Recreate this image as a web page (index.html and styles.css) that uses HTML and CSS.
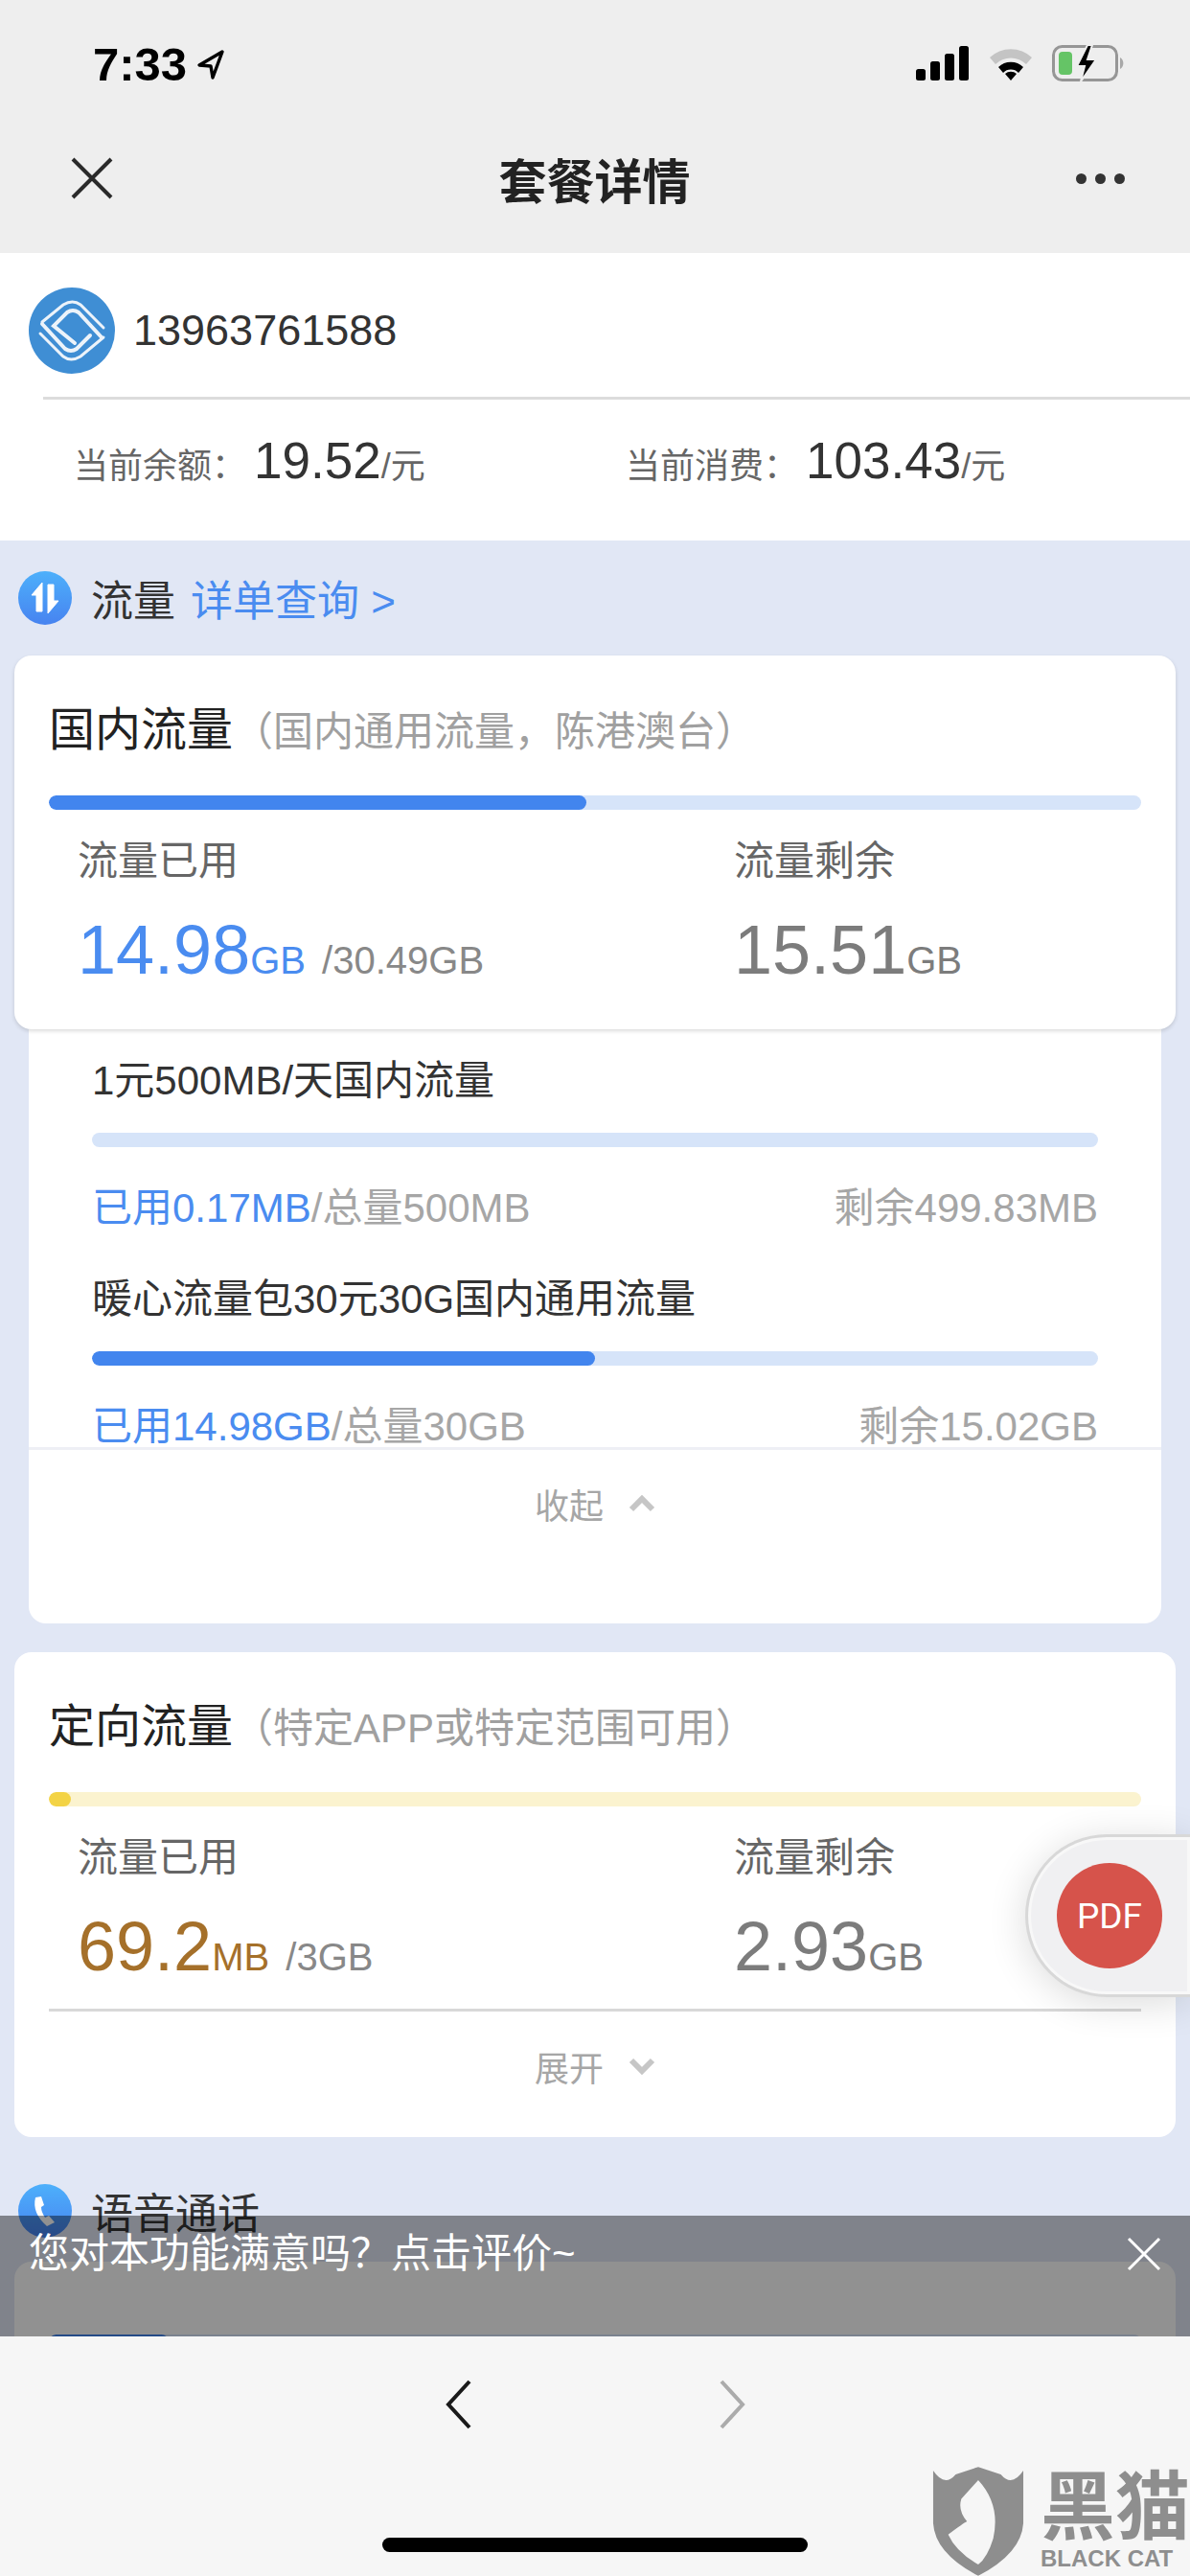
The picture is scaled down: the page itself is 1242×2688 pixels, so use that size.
FILE: index.html
```html
<!DOCTYPE html>
<html lang="en">
<head>
    <meta charset="UTF-8">
    <meta name="viewport" content="width=device-width, initial-scale=1.0">
    <title>套餐详情</title>
    <link rel="stylesheet" href="styles.css">
</head>
<body>
<div class="phone">
    <div class="top-bar">
        <div class="status-bar">
            <div class="clock">
                <span>7:33</span>
                <svg class="loc" width="30" height="32" viewBox="0 0 30 32"><path d="M27 3 L3 17 L15 18 L17 30 Z" fill="none" stroke="#000" stroke-width="3.4" stroke-linejoin="round"/></svg>
            </div>
            <div class="status-icons">
                <svg width="56" height="36" viewBox="0 0 56 36"><rect x="0" y="24" width="10" height="12" rx="2.5"/><rect x="15" y="16" width="10" height="20" rx="2.5"/><rect x="30" y="8" width="10" height="28" rx="2.5"/><rect x="45" y="0" width="10" height="36" rx="2.5"/></svg>
                <svg width="46" height="36" viewBox="0 0 46 36"><path d="M1 12 A32 32 0 0 1 45 12 L39 19 A23 23 0 0 0 7 19 Z" fill="#c4c4c4"/><path d="M10 22 A19 19 0 0 1 36 22 L31 28 A11 11 0 0 0 15 28 Z"/><path d="M17 29 A9 9 0 0 1 29 29 L23 36 Z"/></svg>
                <svg width="76" height="38" viewBox="0 0 76 38"><rect x="1.5" y="1.5" width="66" height="35" rx="9" fill="none" stroke="#969696" stroke-width="3"/><rect x="7" y="7" width="14" height="24" rx="4" fill="#65c466"/><path d="M71 13 A7 7 0 0 1 71 25 Z" fill="#a8a8a8"/><path d="M37 0 L26 22 L34 22 L30 38 L46 15 L37 15 L42 0 Z" stroke="#eee" stroke-width="2"/></svg>
            </div>
        </div>
        <div class="nav-bar">
            <svg class="nav-close" width="44" height="44" viewBox="0 0 44 44"><path d="M2 2 L42 42 M42 2 L2 42" stroke="#2a2a2a" stroke-width="4" fill="none"/></svg>
            <div class="nav-title">套餐详情</div>
            <div class="nav-more"><i></i><i></i><i></i></div>
        </div>
    </div>

    <div class="content">
        <div class="account">
            <div class="account-top">
                <svg width="90" height="90" viewBox="0 0 90 90">
                    <circle cx="45" cy="45" r="45" fill="#3f8ed4"/>
                    <g fill="none" stroke="#fff" stroke-linecap="round" opacity="0.9">
                        <path d="M12 48 L36 72 Q44 78 54 72 L78 52" stroke-width="3"/>
                        <path d="M14 38 L38 64 Q44 68 50 64 L64 50" stroke-width="4"/>
                        <path d="M78 42 L54 18 Q46 12 36 18 L14 36" stroke-width="3"/>
                        <path d="M76 52 L52 26 Q46 22 40 26 L26 40 L48 58" stroke-width="4"/>
                    </g>
                </svg>
                <span class="phone-no">13963761588</span>
            </div>
            <div class="account-line"></div>
            <div class="balance">
                <div class="balance-item"><span class="balance-label">当前余额：</span><b>19.52</b><span class="unit">/元</span></div>
                <div class="balance-item"><span class="balance-label">当前消费：</span><b>103.43</b><span class="unit">/元</span></div>
            </div>
        </div>

        <div class="section-head">
            <span class="round-icon">
                <svg width="56" height="56" viewBox="0 0 56 56"><path d="M25 12 L25 42 L19 42 L19 25 L14 25 Z" fill="#fff" stroke="#fff" stroke-linejoin="round"/><path d="M31 44 L31 14 L37 14 L37 31 L42 31 Z" fill="#fff" stroke="#fff" stroke-linejoin="round"/></svg>
            </span>
            <span class="section-name">流量</span>
            <span class="section-link">详单查询 &gt;</span>
        </div>

        <div class="card card-raised">
            <div class="card-title">国内流量<small>（国内通用流量，陈港澳台）</small></div>
            <div class="bar"><div class="bar-fill" style="width:49.2%"></div></div>
            <div class="usage">
                <div class="usage-col">
                    <div class="usage-label">流量已用</div>
                    <div class="usage-num blue"><b>14.98</b>GB <em>/30.49GB</em></div>
                </div>
                <div class="usage-col">
                    <div class="usage-label">流量剩余</div>
                    <div class="usage-num grey"><b>15.51</b>GB</div>
                </div>
            </div>
        </div>

        <div class="sub-card">
            <div class="pack">
                <div class="pack-name">1元500MB/天国内流量</div>
                <div class="bar pack-bar"></div>
                <div class="pack-info">
                    <span><span class="blue">已用0.17MB</span>/总量500MB</span>
                    <span>剩余499.83MB</span>
                </div>
            </div>
            <div class="pack">
                <div class="pack-name">暖心流量包30元30G国内通用流量</div>
                <div class="bar pack-bar"><div class="bar-fill" style="width:50%"></div></div>
                <div class="pack-info">
                    <span><span class="blue">已用14.98GB</span>/总量30GB</span>
                    <span>剩余15.02GB</span>
                </div>
            </div>
            <div class="fold fold-line">
                <span>收起</span>
                <svg width="28" height="18" viewBox="0 0 28 18"><path d="M3 15 L14 4 L25 15" fill="none" stroke="#c6c6c6" stroke-width="6"/></svg>
            </div>
        </div>

        <div class="card card-second">
            <div class="card-title">定向流量<small>（特定APP或特定范围可用）</small></div>
            <div class="bar bar-yellow"><div class="bar-fill" style="width:2%"></div></div>
            <div class="usage usage-tight">
                <div class="usage-col">
                    <div class="usage-label">流量已用</div>
                    <div class="usage-num brown"><b>69.2</b>MB <em>/3GB</em></div>
                </div>
                <div class="usage-col">
                    <div class="usage-label">流量剩余</div>
                    <div class="usage-num grey"><b>2.93</b>GB</div>
                </div>
            </div>
            <div class="card-rule"></div>
            <div class="fold">
                <span>展开</span>
                <svg width="28" height="18" viewBox="0 0 28 18"><path d="M3 3 L14 14 L25 3" fill="none" stroke="#c6c6c6" stroke-width="6"/></svg>
            </div>
        </div>

        <div class="section-head section-voice">
            <span class="round-icon">
                <svg width="56" height="56" viewBox="0 0 56 56"><path d="M18 14 Q14 30 30 44 L38 40 L32 33 L28 35 Q24 29 24 24 L27 22 L24 13 Z" fill="#fff"/></svg>
            </span>
            <span class="section-name">语音通话</span>
        </div>

        <div class="card">
            <div class="bar"><div class="bar-fill" style="width:11%"></div></div>
            <div class="usage">
                <div class="usage-col"><div class="usage-label">通话已用</div></div>
                <div class="usage-col"><div class="usage-label">通话剩余</div></div>
            </div>
        </div>

        <div class="pdf-tab"><span class="pdf-dot">PDF</span></div>

        <div class="toast">
            <span>您对本功能满意吗？点击评价~</span>
            <svg width="36" height="36" viewBox="0 0 36 36"><path d="M2 2 L34 34 M34 2 L2 34" stroke="#fff" stroke-width="3" fill="none"/></svg>
        </div>
    </div>

    <div class="bottom-bar">
        <div class="arrows">
            <svg width="30" height="52" viewBox="0 0 30 52"><path d="M26 2 L4 26 L26 50" fill="none" stroke="#1a1a1a" stroke-width="4"/></svg>
            <svg width="30" height="52" viewBox="0 0 30 52"><path d="M4 2 L26 26 L4 50" fill="none" stroke="#ababab" stroke-width="4"/></svg>
        </div>
        <div class="home-bar"></div>
        <div class="watermark">
            <svg width="100" height="116" viewBox="0 0 100 116"><path d="M2 4 Q14 22 26 8 L50 0 L74 8 Q86 22 98 4 L98 60 Q96 92 50 116 Q4 92 2 60 Z" fill="#8e8e8e"/><path d="M50 14 Q74 40 66 76 Q60 96 50 104 Q26 90 18 72 Q34 60 38 58 Q28 46 32 34 Z" fill="#f6f6f6"/></svg>
            <div class="wm-text">
                <div class="wm-cn">黑猫</div>
                <div class="wm-en">BLACK CAT</div>
            </div>
        </div>
    </div>
</div>
</body>
</html>
```

FILE: styles.css
```css
* {
    box-sizing: border-box;
}
html, body {
    margin: 0;
    padding: 0;
}
body {
    font-family: "Liberation Sans", "Noto Sans CJK SC", sans-serif;
    color: #333;
}
.phone {
    width: 1242px;
    height: 2688px;
    display: flex;
    flex-direction: column;
    overflow: hidden;
    background: #e1e7f5;
}
.top-bar {
    height: 264px;
    flex: none;
    background: #eeeeee;
}
.status-bar {
    height: 132px;
    padding: 44px 68px 0 97px;
    display: flex;
    justify-content: space-between;
    align-items: flex-start;
}
.clock {
    display: flex;
    align-items: center;
    gap: 10px;
    font-size: 49px;
    line-height: 46px;
    font-weight: bold;
    color: #000;
}
.status-icons {
    display: flex;
    gap: 20px;
    align-items: center;
    padding-top: 3px;
}
.nav-bar {
    height: 132px;
    padding: 0 68px 24px 74px;
    display: flex;
    align-items: center;
    justify-content: space-between;
}
.nav-title {
    font-size: 50px;
    font-weight: bold;
    color: #222;
}
.nav-more {
    display: flex;
    gap: 9px;
}
.nav-more i {
    width: 11px;
    height: 11px;
    border-radius: 50%;
    background: #333;
}
.content {
    position: relative;
    flex: 1;
    min-height: 0;
    overflow: hidden;
}
.account {
    height: 300px;
    background: #fff;
    padding-top: 36px;
}
.account-top {
    display: flex;
    align-items: center;
    gap: 19px;
    padding-left: 30px;
}
.phone-no {
    font-size: 45px;
    color: #333;
}
.account-line {
    height: 3px;
    margin: 24px 0 0 45px;
    background: #dcdcdc;
}
.balance {
    display: flex;
    padding: 33px 0 0 77px;
}
.balance-item {
    width: 576px;
    display: flex;
    align-items: baseline;
}
.balance-label, .unit {
    font-size: 36px;
    color: #666;
}
.balance-item b {
    font-size: 53px;
    font-weight: normal;
    color: #333;
    margin-left: 8px;
}
.section-head {
    height: 120px;
    padding: 0 0 0 19px;
    display: flex;
    align-items: center;
    font-size: 44px;
}
.round-icon {
    width: 56px;
    height: 56px;
    margin-right: 20px;
    border-radius: 50%;
    background: linear-gradient(#4db0fb, #4783f0);
}
.round-icon svg {
    display: block;
}
.section-name {
    color: #333;
    margin-right: 16px;
}
.section-link {
    color: #4a8cf0;
}
.card {
    margin: 0 15px;
    padding: 44px 36px 0;
    background: #fff;
    border-radius: 18px;
}
.card-raised {
    height: 390px;
    position: relative;
    box-shadow: 0 2px 4px rgba(0, 0, 0, 0.14);
}
.card-title {
    font-size: 48px;
    line-height: 68px;
    color: #222;
}
.card-title small {
    font-size: 42px;
    color: #a0a0a0;
}
.bar {
    height: 15px;
    margin-top: 32px;
    border-radius: 8px;
    background: #d6e4f9;
    overflow: hidden;
}
.bar-fill {
    height: 100%;
    border-radius: 8px;
    background: #4285ee;
}
.bar-yellow {
    background: #fbf3cf;
}
.bar-yellow .bar-fill {
    background: #f3d345;
}
.usage {
    display: flex;
    padding: 24px 0 0 30px;
}
.usage-tight {
    padding-top: 24px;
}
.usage-col:first-child {
    width: 685px;
}
.usage-label {
    font-size: 42px;
    line-height: 60px;
    color: #666;
}
.usage-num {
    font-size: 40px;
    margin-top: 20px;
    line-height: 84px;
    white-space: nowrap;
}
.usage-num b {
    font-size: 72px;
    font-weight: normal;
}
.usage-num em {
    font-style: normal;
    color: #888;
    margin-left: 6px;
}
.blue {
    color: #4a8cf0;
}
.grey {
    color: #7c7c7c;
}
.brown {
    color: #a5702a;
}
.sub-card {
    height: 620px;
    margin: 0 30px 30px;
    padding: 0;
    background: #fff;
    border-radius: 0 0 18px 18px;
}
.pack {
    height: 228px;
    padding: 24px 66px 0;
    font-size: 42px;
}
.pack-name {
    line-height: 60px;
    color: #333;
}
.pack-bar {
    margin-top: 24px;
}
.pack-info {
    display: flex;
    justify-content: space-between;
    margin-top: 34px;
    line-height: 60px;
    color: #a6a6a6;
}
.fold {
    height: 114px;
    display: flex;
    align-items: center;
    justify-content: center;
    gap: 26px;
    font-size: 36px;
    color: #a6a6a6;
}
.fold-line {
    border-top: 3px solid #eeeff5;
    margin-top: -20px;
}
.card-second {
    height: 506px;
}
.card-rule {
    height: 3px;
    margin-top: 12px;
    background: #d8d8d8;
}
.section-head.section-voice {
    height: 130px;
    padding-top: 24px;
}
.pdf-tab {
    position: absolute;
    right: 0;
    top: 1650px;
    width: 172px;
    height: 170px;
    padding-left: 30px;
    display: flex;
    align-items: center;
    border-radius: 85px 0 0 85px;
    background: #f0f0f2;
    border: 3px solid #d8d8d8;
    border-right: none;
    box-shadow: 0 6px 40px rgba(0, 0, 0, 0.14), inset 0 0 0 3px #f8f8f8;
}
.pdf-dot {
    width: 110px;
    height: 110px;
    flex: none;
    border-radius: 50%;
    background: #d6534b;
    color: #fff;
    font-family: Roboto, "Liberation Sans", sans-serif;
    font-size: 37px;
    display: flex;
    align-items: center;
    justify-content: center;
}
.toast {
    position: absolute;
    left: 0;
    right: 0;
    bottom: 0;
    height: 126px;
    padding: 10px 30px 0;
    display: flex;
    justify-content: space-between;
    align-items: flex-start;
    background: rgba(0, 0, 0, 0.43);
    color: #fff;
    font-size: 42px;
    line-height: 60px;
}
.toast svg {
    margin-top: 12px;
    margin-right: 0;
}
.bottom-bar {
    height: 250px;
    flex: none;
    position: relative;
    background: #f6f6f6;
}
.arrows {
    display: flex;
    justify-content: center;
    gap: 255px;
    padding-top: 45px;
    margin-left: 0;
}
.arrows svg {
    display: block;
}
.home-bar {
    position: absolute;
    left: 399px;
    top: 210px;
    width: 444px;
    height: 15px;
    border-radius: 8px;
    background: #000;
}
.watermark {
    position: absolute;
    right: 0;
    top: 135px;
    width: 270px;
    display: flex;
    gap: 16px;
}
.wm-text {
    color: #8e8e8e;
    font-weight: bold;
    padding-top: 6px;
}
.wm-cn {
    font-size: 78px;
    line-height: 76px;
    white-space: nowrap;
}
.wm-en {
    font-size: 24px;
    line-height: 30px;
    white-space: nowrap;
}
```
